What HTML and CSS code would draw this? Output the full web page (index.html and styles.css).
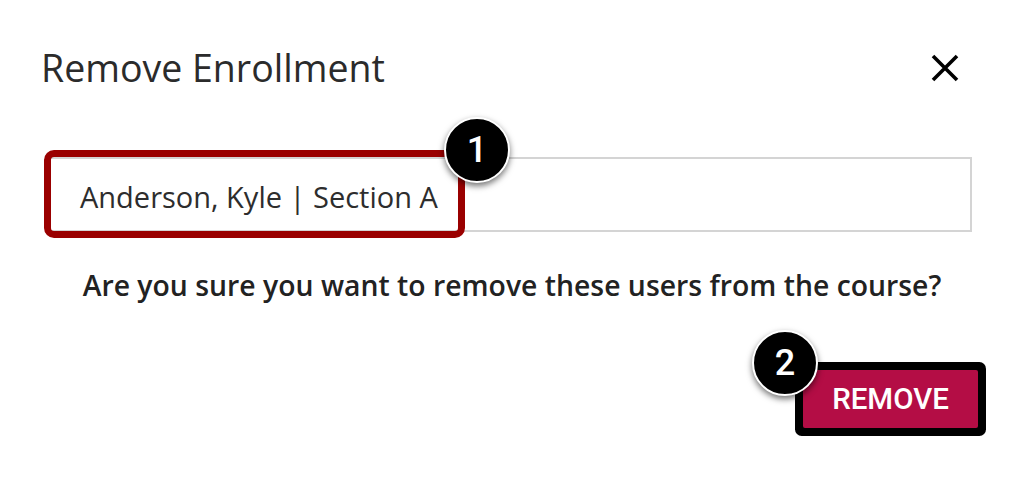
FILE: index.html
```html
<!DOCTYPE html>
<html lang="en">
<head>
<meta charset="utf-8">
<title>Remove Enrollment</title>
<link rel="stylesheet" href="styles.css">
</head>
<body>
<div class="dialog">
  <div class="header">
    <h1 class="title">Remove Enrollment</h1>
    <button class="close" aria-label="Close">
      <svg width="28" height="28" viewBox="0 0 28 28"><path d="M2 2 L26 26 M26 2 L2 26" stroke="#000" stroke-width="3.6" stroke-linecap="butt" fill="none"/></svg>
    </button>
  </div>
  <div class="field">
    <span class="field-text">Anderson, Kyle | Section A</span>
    <div class="highlight"></div>
    <div class="badge badge-1">1</div>
  </div>
  <p class="question"><span class="question-text">Are you sure you want to remove these users from the course?</span></p>
  <div class="footer">
    <div class="btn-wrap">
      <button class="remove">REMOVE</button>
      <div class="badge badge-2">2</div>
    </div>
  </div>
</div>
</body>
</html>
```
FILE: styles.css
```css
html, body {
  margin: 0;
  padding: 0;
  background: #fff;
}
body {
  min-height: 478px;
}
.dialog {
  padding: 45px 52px 50px 48px;
  font-family: "Open Sans", "Liberation Sans", sans-serif;
  color: #2d2d2d;
}
.header {
  display: flex;
  justify-content: space-between;
  align-items: center;
  margin-left: -7px;
}
.title {
  margin: 0;
  font-size: 37.5px;
  line-height: 46px;
  font-weight: 400;
  color: #2b2b2b;
}
.close {
  border: 0;
  background: none;
  padding: 0;
  margin-right: 13px;
  width: 28px;
  height: 28px;
  display: flex;
}
.field {
  position: relative;
  margin-top: 66px;
  height: 75px;
  box-sizing: border-box;
  border: 2px solid #d4d4d4;
  display: flex;
  align-items: center;
  padding-left: 30px;
  padding-top: 3px;
}
.field-text {
  font-size: 29px;
  color: #2d2d2d;
}
.highlight {
  position: absolute;
  left: -6px;
  top: -9px;
  width: 421px;
  height: 88px;
  box-sizing: border-box;
  border: 7px solid #9a0000;
  border-radius: 10px;
}
.badge {
  position: absolute;
  width: 66px;
  height: 66px;
  box-sizing: border-box;
  border-radius: 50%;
  background: #000;
  border: 2px solid #fff;
  box-shadow: 0 3px 6px rgba(0,0,0,0.55);
  color: #fff;
  font-family: Roboto, "Liberation Sans", sans-serif;
  font-size: 36px;
  font-weight: 500;
  display: flex;
  align-items: center;
  justify-content: center;
}
.badge-1 {
  left: 394px;
  top: -42px;
}
.question {
  margin: 33px 0 0;
  text-align: center;
  font-size: 29px;
  line-height: 40px;
  font-weight: 600;
  color: #222;
  margin-left: -48px;
  margin-right: -52px;
}
.question-text {
  display: inline-block;
  transform: scaleX(0.978);
  transform-origin: center;
  white-space: nowrap;
}
.footer {
  display: flex;
  justify-content: flex-end;
  margin-top: 65px;
  margin-right: -6px;
}
.btn-wrap {
  position: relative;
}
.remove {
  display: block;
  width: 175px;
  height: 58px;
  border: 0;
  border-radius: 2px;
  background: #b40d45;
  color: #fff;
  font-family: Roboto, "Liberation Sans", sans-serif;
  font-size: 29.5px;
  font-weight: 500;
  padding: 0;
  box-shadow: 0 0 0 8px #000;
}
.badge-2 {
  left: -51px;
  top: -40px;
}
```
